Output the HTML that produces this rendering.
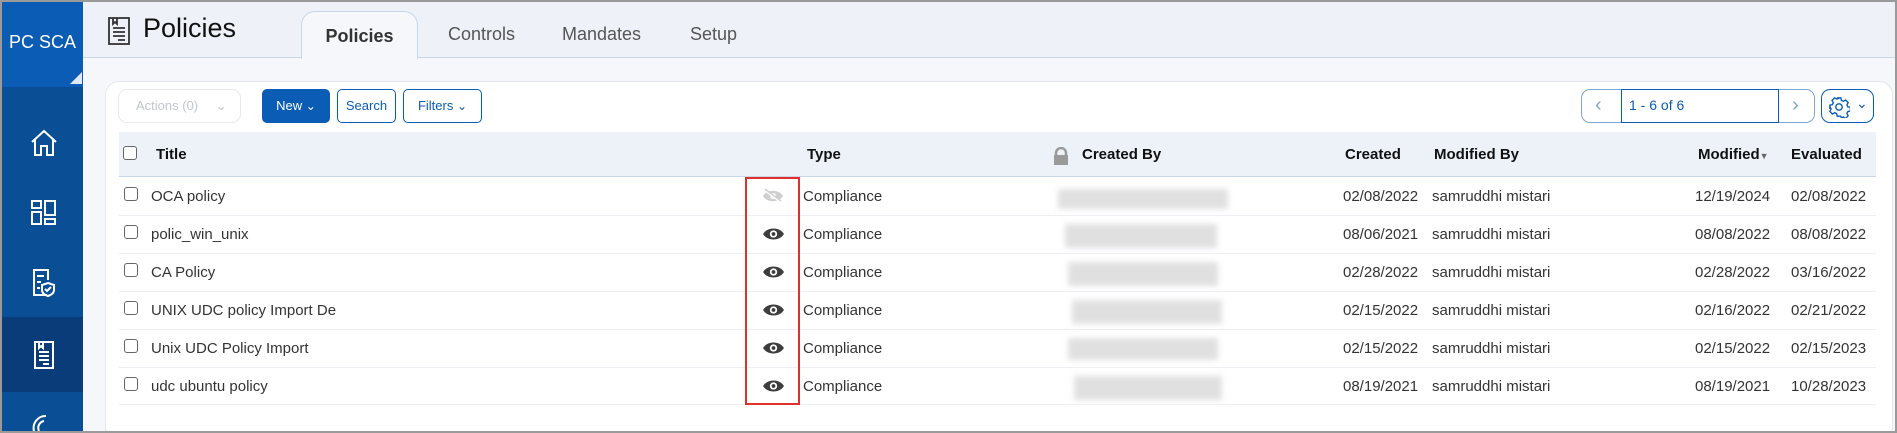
<!DOCTYPE html>
<html><head><meta charset="utf-8"><style>
*{box-sizing:border-box;margin:0;padding:0}
body{width:1897px;height:433px;overflow:hidden;font-family:"Liberation Sans",Arial,sans-serif;background:#9a9a9a;position:relative}
#frame{position:absolute;left:2px;top:2px;width:1893px;height:429px;background:#f5f7fb;overflow:hidden}
.abs{position:absolute}
#side{left:0;top:0;width:81px;height:429px;background:#0a4f96}
#brand{left:0;top:0;width:81px;height:85px;background:#0b5cb5;color:#fff;font-size:18px;text-align:center;line-height:80px}
#hdr{left:81px;top:0;width:1812px;height:56px;background:#eef2f8;border-bottom:1px solid #c8d6ea}
.tab{font-size:18px;color:#555}
#card{left:103px;top:79px;width:1788px;height:360px;background:#fff;border:1px solid #e3e8f0;border-radius:14px}
.btn{height:34px;border:1px solid #0b5cb5;border-radius:5px;color:#0b5cb5;font-size:13px;line-height:32px;text-align:center}
.th{top:130px;height:45px;font-weight:bold;font-size:15px;line-height:45px;color:#111}
.cell{font-size:15px;color:#333}
.cb{width:14px;height:14px;border:1.5px solid #666;border-radius:3px;background:#fff}
.rowline{left:117px;width:1757px;height:1px;background:#eceff3}
.blur{background:#e0e0e0;filter:blur(3px)}
</style></head><body><div id="frame">
<div id="side" class="abs"></div>
<div id="brand" class="abs">PC SCA</div>
<div class="abs" style="left:68px;top:70px;width:0;height:0;border-left:12px solid transparent;border-bottom:12px solid #dfe9f6"></div>
<div class="abs" style="left:0;top:315px;width:81px;height:75px;background:#093c78"></div>
<svg class="abs" style="left:28px;top:126px" width="28" height="30" viewBox="0 0 28 30" fill="none" stroke="#fff" stroke-width="2"><path d="M2 14 L14 3 L26 14 M5 11 V27 H11 V18 H17 V27 H23 V11"/></svg>
<svg class="abs" style="left:28px;top:197px" width="28" height="28" viewBox="0 0 28 28" fill="none" stroke="#fff" stroke-width="2"><rect x="2" y="2" width="9" height="7"/><rect x="2" y="13" width="9" height="12"/><rect x="15" y="2" width="10" height="14"/><rect x="15" y="20" width="10" height="5"/></svg>
<svg class="abs" style="left:29px;top:266px" width="26" height="30" viewBox="0 0 26 30" fill="none" stroke="#fff" stroke-width="2"><path d="M16 27 H3 V2 H17 V12 M6 8 H13 M6 14 H10 M6 20 H9"/><path d="M17 15 l6 2 v5 c0 3-3 5-6 6 c-3-1-6-3-6-6 v-5z M14 21 l2 2 4-4"/></svg>
<svg class="abs" style="left:31px;top:338px" width="22" height="30" viewBox="0 0 22 30" fill="none" stroke="#fff" stroke-width="2"><rect x="2" y="2" width="18" height="26"/><path d="M6 2 v6 l2-2 2 2 V2 M6 12 H16 M6 16 H16 M6 20 H16 M10 24 H16"/></svg>
<svg class="abs" style="left:28px;top:411px" width="28" height="20" viewBox="0 0 28 20" fill="none" stroke="#fff" stroke-width="2"><path d="M16 3 A12 12 0 0 0 4 18 M14 8 A7 7 0 0 0 9 18"/></svg>
<div id="hdr" class="abs"></div>
<svg class="abs" style="left:106px;top:15px" width="22" height="28" viewBox="0 0 22 28" fill="none" stroke="#333" stroke-width="1.8"><rect x="1" y="1" width="20" height="26"/><path d="M5 1 v6 l2-2 2 2 V1 M5 11 H17 M5 15 H17 M5 19 H17 M10 23 H17"/></svg>
<div class="abs" style="left:141px;top:11px;font-size:27px;color:#111">Policies</div>
<div class="abs" style="left:299px;top:9px;width:117px;height:48px;background:#f5f7fb;border:1px solid #c8d6ea;border-bottom:none;border-radius:14px 14px 0 0"></div>
<div class="abs tab" style="left:299px;top:24px;width:117px;text-align:center;font-weight:bold;color:#333">Policies</div>
<div class="abs tab" style="left:446px;top:22px">Controls</div>
<div class="abs tab" style="left:560px;top:22px">Mandates</div>
<div class="abs tab" style="left:688px;top:22px">Setup</div>
<div id="card" class="abs"></div>
<div class="abs btn" style="left:116px;top:87px;width:123px;border-color:#e6eaef;color:#c2c7ce;border-radius:9px;text-align:left;padding-left:17px">Actions (0) <span style="margin-left:14px">&#8964;</span></div>
<div class="abs btn" style="left:260px;top:87px;width:68px;background:#0b5cb5;color:#fff">New <span style="font-size:12px">&#8964;</span></div>
<div class="abs btn" style="left:335px;top:87px;width:59px">Search</div>
<div class="abs btn" style="left:401px;top:87px;width:79px">Filters <span style="font-size:12px">&#8964;</span></div>
<div class="abs" style="left:1579px;top:87px;width:234px;height:34px;border:1px solid #7fa5d4;border-radius:9px"></div>
<div class="abs" style="left:1619px;top:87px;width:158px;height:34px;border:1.5px solid #0b5cb5;font-size:14px;color:#0b5cb5;line-height:31px;padding-left:7px">1 - 6 of 6</div>
<div class="abs" style="left:1593px;top:92px;font-size:20px;color:#7fa5d4">&#8249;</div>
<div class="abs" style="left:1790px;top:92px;font-size:20px;color:#7fa5d4">&#8250;</div>
<div class="abs" style="left:1819px;top:87px;width:53px;height:34px;border:1px solid #0b5cb5;border-radius:9px"></div>
<svg class="abs" style="left:1826px;top:94px" width="22" height="22" viewBox="0 0 24 24" fill="none" stroke="#0b5cb5" stroke-width="1.5"><circle cx="12" cy="12" r="3.5"/><path d="M10 2h4l.6 2.8 2 1 2.6-1.4 2.8 2.8-1.4 2.6 1 2 2.8.6v4l-2.8.6-1 2 1.4 2.6-2.8 2.8-2.6-1.4-2 1L14 22h-4l-.6-2.8-2-1-2.6 1.4-2.8-2.8 1.4-2.6-1-2L2 14v-4l2.8-.6 1-2L4.4 4.8 7.2 2 9.8 3.4l2-1z"/></svg>
<div class="abs" style="left:1854px;top:93px;font-size:14px;color:#0b5cb5">&#8964;</div>
<div class="abs" style="left:117px;top:130px;width:1757px;height:45px;background:#edf2f9;border-bottom:1.5px solid #c8d6ea"></div>
<div class="abs cb" style="left:121px;top:144px"></div>
<div class="abs th" style="left:154px">Title</div>
<div class="abs th" style="left:805px">Type</div>
<svg class="abs" style="left:1050px;top:145px" width="18" height="18" viewBox="0 0 18 18"><path d="M4 8 V6 a5 5 0 0 1 10 0 V8" fill="none" stroke="#9a9a9a" stroke-width="2.5"/><rect x="2" y="8" width="14" height="10" fill="#9a9a9a"/></svg>
<div class="abs th" style="left:1080px">Created By</div>
<div class="abs th" style="left:1343px">Created</div>
<div class="abs th" style="left:1432px">Modified By</div>
<div class="abs th" style="left:1696px">Modified<span style="font-size:9px;color:#666">&#9660;</span></div>
<div class="abs th" style="left:1789px">Evaluated</div>
<div class="abs rowline" style="top:213px"></div>
<div class="abs rowline" style="top:251px"></div>
<div class="abs rowline" style="top:289px"></div>
<div class="abs rowline" style="top:327px"></div>
<div class="abs rowline" style="top:365px"></div>
<div class="abs rowline" style="top:402px"></div>
<div class="abs cb" style="left:122px;top:185px"></div>
<div class="abs cb" style="left:122px;top:223px"></div>
<div class="abs cb" style="left:122px;top:261px"></div>
<div class="abs cb" style="left:122px;top:299px"></div>
<div class="abs cb" style="left:122px;top:337px"></div>
<div class="abs cb" style="left:122px;top:375px"></div>
<div class="abs cell" style="left:149px;top:186px">OCA policy</div>
<div class="abs cell" style="left:149px;top:224px">polic_win_unix</div>
<div class="abs cell" style="left:149px;top:262px">CA Policy</div>
<div class="abs cell" style="left:149px;top:300px">UNIX UDC policy Import De</div>
<div class="abs cell" style="left:149px;top:338px">Unix UDC Policy Import</div>
<div class="abs cell" style="left:149px;top:376px">udc ubuntu policy</div>
<div class="abs" style="left:743px;top:175px;width:55px;height:228px;border:2px solid #e0302a"></div>
<svg class="abs" style="left:760px;top:186px" width="22" height="16" viewBox="0 0 22 16"><path d="M1 8 C5 1 17 1 21 8 C17 15 5 15 1 8z" fill="#cfcfcf"/><circle cx="11" cy="8" r="3" fill="#fff"/><path d="M3 2 L19 14" stroke="#fff" stroke-width="2.5"/><path d="M3 1 L19 13" stroke="#cfcfcf" stroke-width="1.5"/></svg>
<svg class="abs" style="left:760px;top:224px" width="23" height="16" viewBox="0 0 22 14"><path d="M1 7 C5 0 17 0 21 7 C17 14 5 14 1 7z" fill="#3d3d3d"/><circle cx="11" cy="7" r="3.5" fill="#fff"/><circle cx="11" cy="7" r="1.8" fill="#3d3d3d"/></svg>
<svg class="abs" style="left:760px;top:262px" width="23" height="16" viewBox="0 0 22 14"><path d="M1 7 C5 0 17 0 21 7 C17 14 5 14 1 7z" fill="#3d3d3d"/><circle cx="11" cy="7" r="3.5" fill="#fff"/><circle cx="11" cy="7" r="1.8" fill="#3d3d3d"/></svg>
<svg class="abs" style="left:760px;top:300px" width="23" height="16" viewBox="0 0 22 14"><path d="M1 7 C5 0 17 0 21 7 C17 14 5 14 1 7z" fill="#3d3d3d"/><circle cx="11" cy="7" r="3.5" fill="#fff"/><circle cx="11" cy="7" r="1.8" fill="#3d3d3d"/></svg>
<svg class="abs" style="left:760px;top:338px" width="23" height="16" viewBox="0 0 22 14"><path d="M1 7 C5 0 17 0 21 7 C17 14 5 14 1 7z" fill="#3d3d3d"/><circle cx="11" cy="7" r="3.5" fill="#fff"/><circle cx="11" cy="7" r="1.8" fill="#3d3d3d"/></svg>
<svg class="abs" style="left:760px;top:376px" width="23" height="16" viewBox="0 0 22 14"><path d="M1 7 C5 0 17 0 21 7 C17 14 5 14 1 7z" fill="#3d3d3d"/><circle cx="11" cy="7" r="3.5" fill="#fff"/><circle cx="11" cy="7" r="1.8" fill="#3d3d3d"/></svg>
<div class="abs cell" style="left:801px;top:186px">Compliance</div>
<div class="abs cell" style="left:801px;top:224px">Compliance</div>
<div class="abs cell" style="left:801px;top:262px">Compliance</div>
<div class="abs cell" style="left:801px;top:300px">Compliance</div>
<div class="abs cell" style="left:801px;top:338px">Compliance</div>
<div class="abs cell" style="left:801px;top:376px">Compliance</div>
<div class="abs blur" style="left:1056px;top:187px;width:170px;height:20px"></div>
<div class="abs blur" style="left:1063px;top:222px;width:152px;height:24px"></div>
<div class="abs blur" style="left:1066px;top:260px;width:150px;height:24px"></div>
<div class="abs blur" style="left:1070px;top:298px;width:150px;height:24px"></div>
<div class="abs blur" style="left:1066px;top:336px;width:150px;height:22px"></div>
<div class="abs blur" style="left:1072px;top:374px;width:148px;height:24px"></div>
<div class="abs cell" style="left:1341px;top:186px">02/08/2022</div>
<div class="abs cell" style="left:1341px;top:224px">08/06/2021</div>
<div class="abs cell" style="left:1341px;top:262px">02/28/2022</div>
<div class="abs cell" style="left:1341px;top:300px">02/15/2022</div>
<div class="abs cell" style="left:1341px;top:338px">02/15/2022</div>
<div class="abs cell" style="left:1341px;top:376px">08/19/2021</div>
<div class="abs cell" style="left:1430px;top:186px">samruddhi mistari</div>
<div class="abs cell" style="left:1430px;top:224px">samruddhi mistari</div>
<div class="abs cell" style="left:1430px;top:262px">samruddhi mistari</div>
<div class="abs cell" style="left:1430px;top:300px">samruddhi mistari</div>
<div class="abs cell" style="left:1430px;top:338px">samruddhi mistari</div>
<div class="abs cell" style="left:1430px;top:376px">samruddhi mistari</div>
<div class="abs cell" style="left:1693px;top:186px">12/19/2024</div>
<div class="abs cell" style="left:1693px;top:224px">08/08/2022</div>
<div class="abs cell" style="left:1693px;top:262px">02/28/2022</div>
<div class="abs cell" style="left:1693px;top:300px">02/16/2022</div>
<div class="abs cell" style="left:1693px;top:338px">02/15/2022</div>
<div class="abs cell" style="left:1693px;top:376px">08/19/2021</div>
<div class="abs cell" style="left:1789px;top:186px">02/08/2022</div>
<div class="abs cell" style="left:1789px;top:224px">08/08/2022</div>
<div class="abs cell" style="left:1789px;top:262px">03/16/2022</div>
<div class="abs cell" style="left:1789px;top:300px">02/21/2022</div>
<div class="abs cell" style="left:1789px;top:338px">02/15/2023</div>
<div class="abs cell" style="left:1789px;top:376px">10/28/2023</div>
</div></body></html>
